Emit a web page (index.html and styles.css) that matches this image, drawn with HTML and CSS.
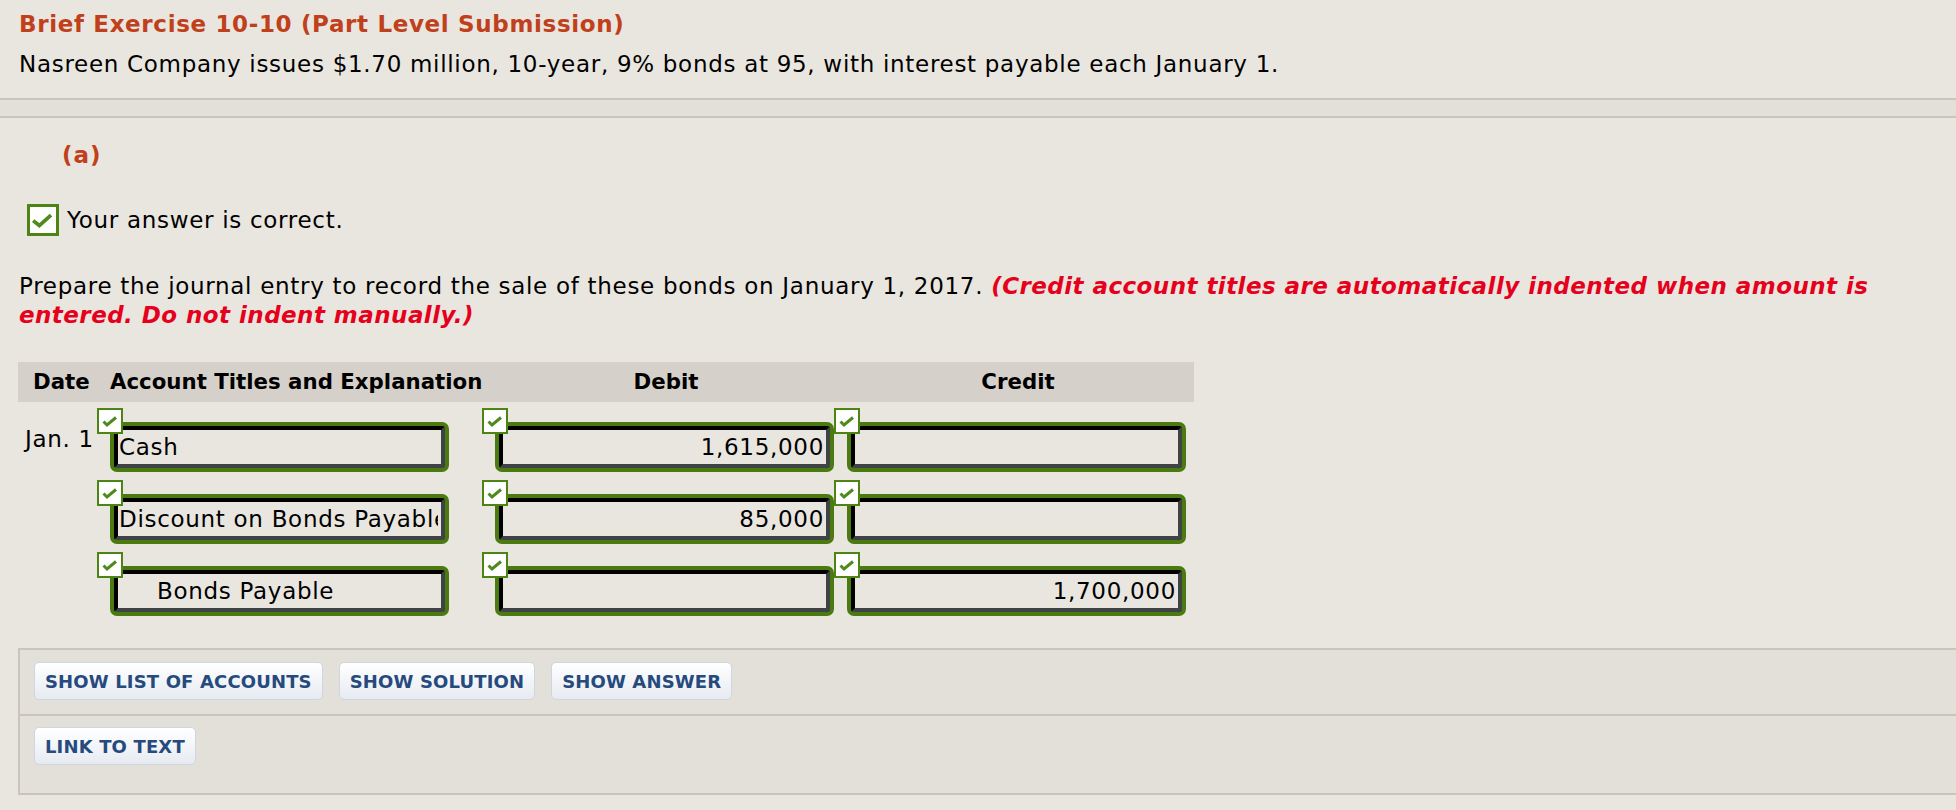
FILE: index.html
```html
<!DOCTYPE html>
<html lang="en">
<head>
<meta charset="utf-8">
<title>Brief Exercise 10-10</title>
<link rel="stylesheet" href="styles.css">
</head>
<body>
<div class="problem">
  <h1 class="problem-title">Brief Exercise 10-10 (Part Level Submission)</h1>
  <p class="problem-text">Nasreen Company issues $1.70 million, 10-year, 9% bonds at 95, with interest payable each January 1.</p>
</div>
<div class="band"></div>
<div class="part">
  <h2 class="part-label">(a)</h2>
  <div class="status">
    <span class="check check-lg"><svg viewBox="0 0 26 26"><path d="M5 13.5 L10 17.5 L19.5 9"/></svg></span>
    <span class="status-text">Your answer is correct.</span>
  </div>
  <p class="prompt">Prepare the journal entry to record the sale of these bonds on January 1, 2017. <em class="note">(Credit account titles are automatically indented when amount is entered. Do not indent manually.)</em></p>

  <div class="journal">
    <div class="jrow jhead">
      <div class="jcell jdate">Date</div>
      <div class="jcell jacct">Account Titles and Explanation</div>
      <div class="jcell jdebit">Debit</div>
      <div class="jcell jcredit">Credit</div>
    </div>

    <div class="jrow">
      <div class="jcell jdate">Jan. 1</div>
      <div class="jcell field">
        <span class="check"><svg viewBox="0 0 26 26"><path d="M6.5 13.5 L10 17 L19 9.5"/></svg></span>
        <input class="entry" type="text" value="Cash" readonly>
      </div>
      <div class="jcell field">
        <span class="check"><svg viewBox="0 0 26 26"><path d="M6.5 13.5 L10 17 L19 9.5"/></svg></span>
        <input class="entry num" type="text" value="1,615,000" readonly>
      </div>
      <div class="jcell field">
        <span class="check"><svg viewBox="0 0 26 26"><path d="M6.5 13.5 L10 17 L19 9.5"/></svg></span>
        <input class="entry num" type="text" value="" readonly>
      </div>
    </div>

    <div class="jrow">
      <div class="jcell jdate"></div>
      <div class="jcell field">
        <span class="check"><svg viewBox="0 0 26 26"><path d="M6.5 13.5 L10 17 L19 9.5"/></svg></span>
        <input class="entry" type="text" value="Discount on Bonds Payable" readonly>
      </div>
      <div class="jcell field">
        <span class="check"><svg viewBox="0 0 26 26"><path d="M6.5 13.5 L10 17 L19 9.5"/></svg></span>
        <input class="entry num" type="text" value="85,000" readonly>
      </div>
      <div class="jcell field">
        <span class="check"><svg viewBox="0 0 26 26"><path d="M6.5 13.5 L10 17 L19 9.5"/></svg></span>
        <input class="entry num" type="text" value="" readonly>
      </div>
    </div>

    <div class="jrow">
      <div class="jcell jdate"></div>
      <div class="jcell field">
        <span class="check"><svg viewBox="0 0 26 26"><path d="M6.5 13.5 L10 17 L19 9.5"/></svg></span>
        <input class="entry indent" type="text" value="Bonds Payable" readonly>
      </div>
      <div class="jcell field">
        <span class="check"><svg viewBox="0 0 26 26"><path d="M6.5 13.5 L10 17 L19 9.5"/></svg></span>
        <input class="entry num" type="text" value="" readonly>
      </div>
      <div class="jcell field">
        <span class="check"><svg viewBox="0 0 26 26"><path d="M6.5 13.5 L10 17 L19 9.5"/></svg></span>
        <input class="entry num" type="text" value="1,700,000" readonly>
      </div>
    </div>
  </div>
</div>

<div class="actions">
  <div class="action-row">
    <button class="btn" type="button">SHOW LIST OF ACCOUNTS</button>
    <button class="btn" type="button">SHOW SOLUTION</button>
    <button class="btn" type="button">SHOW ANSWER</button>
  </div>
  <div class="action-row action-row-last">
    <button class="btn" type="button">LINK TO TEXT</button>
  </div>
</div>
</body>
</html>
```
FILE: styles.css
```css
* { box-sizing: border-box; }

html, body {
  margin: 0;
  background: #e9e6df;
}

body {
  font-family: "DejaVu Sans", Verdana, sans-serif;
  font-size: 23px;
  letter-spacing: 0.7px;
  line-height: 28px;
  color: #000;
  overflow: hidden;
}

.problem {
  padding: 10px 19px 0;
}

.problem-title {
  margin: 0;
  font-size: 23px;
  letter-spacing: 0.65px;
  line-height: 28px;
  font-weight: bold;
  color: #c0401b;
}

.problem-text {
  margin: 12px 0 0;
}

.band {
  margin-top: 20px;
  height: 20px;
  background: #e3e0d9;
  border-top: 2px solid #c9c5bb;
  border-bottom: 2px solid #c9c5bb;
}

.part {
  padding: 0 18px;
}

.part-label {
  margin: 23px 0 0 44px;
  font-size: 23px;
  letter-spacing: 1px;
  line-height: 28px;
  font-weight: bold;
  color: #c0401b;
}

.status {
  display: flex;
  align-items: center;
  margin: 35px 0 0 9px;
  height: 32px;
}

.status-text {
  margin-left: 8px;
}

.check {
  display: inline-block;
  width: 26px;
  height: 26px;
  background: #fff;
  border: 2px solid #4c8513;
}

.check svg {
  display: block;
  margin: -2px;
  width: 26px;
  height: 26px;
}

.check path {
  fill: none;
  stroke: #4f8a1d;
  stroke-width: 3;
  stroke-linecap: butt;
  stroke-linejoin: miter;
}

.check-lg {
  width: 32px;
  height: 32px;
  border-width: 3px;
}

.check-lg svg {
  margin: -3px;
  width: 32px;
  height: 32px;
}

.check-lg path {
  stroke-width: 3;
}

.prompt {
  margin: 36px 0 0 1px;
  line-height: 29px;
}

.note {
  font-size: 23px;
  letter-spacing: 0.45px;
  font-weight: bold;
  font-style: italic;
  color: #e5001c;
}

.journal {
  margin-top: 32px;
  width: 1176px;
}

.jrow {
  display: grid;
  grid-template-columns: 79px 385px 352px 360px;
  height: 72px;
}

.jcell {
  white-space: nowrap;
}

.jdate {
  padding-left: 7px;
  padding-top: 17px;
}

.jhead {
  height: 40px;
  margin-bottom: 6px;
  background: #d5d1ca;
  font-weight: bold;
  font-size: 21.3px;
  letter-spacing: 0;
  align-items: center;
}

.jhead .jcell { padding-top: 0; }
.jhead .jdate { padding-left: 15px; }
.jhead .jacct { padding-left: 13px; }
.jhead .jdebit { text-align: center; padding-left: 16px; }
.jhead .jcredit { text-align: center; padding-left: 8px; }

.field {
  position: relative;
  padding: 14px 0 0 13px;
}

.field .check {
  position: absolute;
  left: 0;
  top: 0;
  z-index: 1;
}

.entry {
  display: block;
  margin: 4px 0 0 4px;
  width: 331px;
  height: 42px;
  padding: 0 3px 0 1px;
  font-family: "DejaVu Sans", Verdana, sans-serif;
  font-size: 23px;
  letter-spacing: 0.7px;
  color: #000;
  background: #e9e6df;
  border: 4px solid;
  border-color: #000 #404346 #404346 #000;
  border-radius: 3px;
  box-shadow: 0 0 0 4px #4a7a10;
  outline: none;
}

.entry.num { text-align: right; padding-right: 2px; }
.entry.indent { padding-left: 39px; }

.actions {
  margin: 24px 0 0 18px;
  background: #e3e0d9;
  border: 2px solid #c9c5bb;
  border-right: 0;
}

.action-row {
  display: flex;
  gap: 16px;
  padding: 12px 0 14px 14px;
}

.action-row + .action-row {
  border-top: 2px solid #c9c5bb;
  padding-top: 11px;
  padding-bottom: 28px;
}

.btn {
  height: 38px;
  padding: 0 10px;
  font-family: "DejaVu Sans", Verdana, sans-serif;
  font-size: 18px;
  letter-spacing: 0.15px;
  font-weight: bold;
  color: #264a7e;
  background: linear-gradient(#ffffff, #e6ebf1);
  border: 1px solid #cfd6e0;
  border-radius: 5px;
}
```
